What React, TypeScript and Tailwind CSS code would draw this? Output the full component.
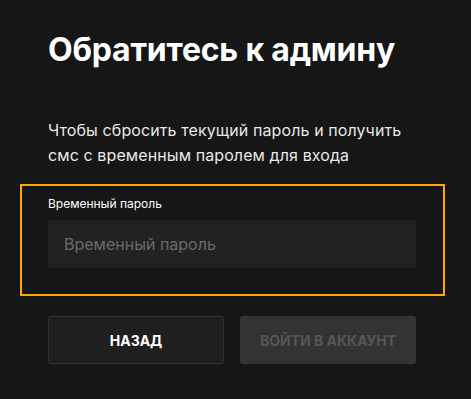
export default function App() {
  return (
    <div className="min-h-[399px] w-full bg-[#161616] font-['Inter','Noto_Sans',sans-serif] text-white">
      <div className="flex flex-col px-5 pt-[30px]">
        <h1 className="px-7 text-[32px] font-bold leading-[40px] tracking-[-0.2px]">Обратитесь к админу</h1>
        <p className="mt-[48px] px-7 text-[16px] leading-[25px] tracking-[0.1px] text-[#e8e8e8]">
          Чтобы сбросить текущий пароль и получить смс с временным паролем для входа
        </p>
        <div className="mt-[16px] flex w-[425px] flex-col border-2 border-[#ffa800] px-[26px] pb-[26px] pt-[8px]">
          <label className="text-[12px] leading-[20px] text-white">Временный пароль</label>
          <input
            placeholder="Временный пароль"
            className="mt-[6px] h-12 w-[368px] rounded-[3px] bg-[#222222] px-4 text-[16px] text-white outline-none placeholder:text-[#6a6a6a]"
          />
        </div>
        <div className="mt-5 flex gap-4 px-7">
          <button className="h-12 w-[176px] rounded-[3px] border border-[#333333] bg-[#1f1f1f] text-[14px] font-bold text-white">
            НАЗАД
          </button>
          <button disabled className="h-12 w-[176px] rounded-[3px] bg-[#333333] text-[14px] font-bold text-[#565656]">
            ВОЙТИ В АККАУНТ
          </button>
        </div>
      </div>
    </div>
  );
}
